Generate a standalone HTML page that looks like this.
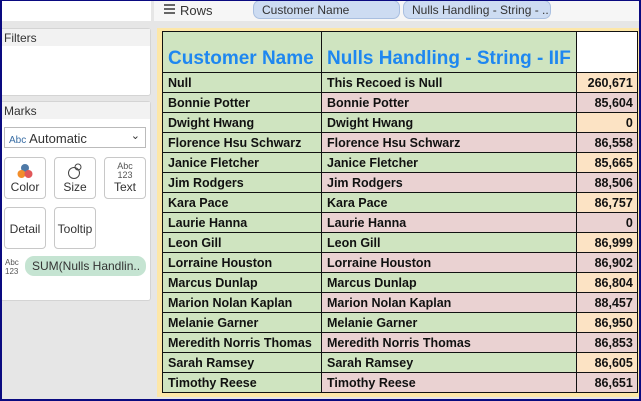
<!DOCTYPE html>
<html><head><style>
*{margin:0;padding:0;box-sizing:border-box}
body{width:641px;height:401px;overflow:hidden;background:#e6e6e6;font-family:"Liberation Sans",Arial,sans-serif;position:relative}
.abs{position:absolute}
.ui{font-family:"Liberation Sans",Arial,sans-serif;font-size:12px;color:#333;white-space:nowrap;overflow:hidden}
.card{background:#fff;border:1px solid #d4d4d4;border-radius:3px}
.btn{position:absolute;background:#fff;border:1px solid #c8c8c8;border-radius:4px;text-align:center;font-size:12px;color:#333}
table{border-collapse:collapse;position:absolute;left:162px;top:31px;table-layout:fixed}
td{border:1.5px solid #111;height:20px;font-weight:bold;font-size:12.5px;color:#111;padding:0 5px;white-space:nowrap;overflow:hidden}
.g{background:#cfe4c0}.p{background:#ead2d2}.o{background:#fce3c4}
td.n{text-align:right;padding-right:4px}
th{border:1.5px solid #111;height:41px;vertical-align:bottom;text-align:left;color:#1e87f0;font-size:19px;font-weight:bold;padding:0 5px 2px;background:#cfe4c0;white-space:nowrap}
</style></head><body>
<div class="abs" style="left:0;top:0;width:151px;height:21px;background:#fff"></div>
<div class="abs" style="left:154px;top:0;width:487px;height:21px;background:#f6f6f6"></div>
<div class="abs" style="left:164px;top:4px;width:11px;height:10px;background:repeating-linear-gradient(#666 0 2px,transparent 2px 4px)"></div>
<div class="abs ui" style="left:180px;top:3px;font-size:13px">Rows</div>
<div class="abs ui" style="left:253px;top:0px;width:147px;height:19px;background:#cddcf2;border:1px solid #a9bfe0;border-radius:7px;padding:2px 8px;font-size:12px">Customer Name</div>
<div class="abs ui" style="left:403px;top:0px;width:148px;height:19px;background:#cddcf2;border:1px solid #a9bfe0;border-radius:7px;padding:2px 8px;font-size:12px">Nulls Handling - String - ..</div>
<div class="abs card" style="left:0;top:28px;width:151px;height:68px"></div>
<div class="abs ui" style="left:1px;top:29px;width:149px;height:17px;background:#f2f2f2;padding:2px 3px">Filters</div>
<div class="abs card" style="left:0;top:101px;width:151px;height:200px"></div>
<div class="abs ui" style="left:1px;top:102px;width:149px;height:17px;background:#f2f2f2;padding:2px 3px">Marks</div>
<div class="abs ui" style="left:4px;top:127px;width:142px;height:21px;border:1px solid #bbb;background:#fff;padding:3px 4px;font-size:13px"><span style="color:#3a6ea5;font-size:10px">Abc</span> Automatic<span style="position:absolute;right:5px;top:1px;font-size:11px">&#8964;</span></div>
<div class="btn" style="left:4px;top:157px;width:42px;height:42px">
 <svg width="20" height="18" style="margin-top:4px" viewBox="0 0 20 18"><circle cx="10" cy="6" r="4" fill="#4e79a7"/><circle cx="6.5" cy="12" r="4" fill="#f28e2b"/><circle cx="13.5" cy="12" r="4" fill="#e15759"/></svg><div style="margin-top:-3px">Color</div></div>
<div class="btn" style="left:54px;top:157px;width:42px;height:42px">
 <svg width="18" height="18" style="margin-top:4px" viewBox="0 0 18 18"><circle cx="8" cy="11" r="5.5" fill="none" stroke="#444"/><circle cx="12" cy="5" r="3" fill="none" stroke="#444"/></svg><div style="margin-top:-3px">Size</div></div>
<div class="btn" style="left:104px;top:157px;width:42px;height:42px"><div style="font-size:9px;line-height:9px;margin-top:4px;color:#555">Abc<br>123</div><div>Text</div></div>
<div class="btn" style="left:4px;top:207px;width:42px;height:42px;padding-top:14px">Detail</div>
<div class="btn" style="left:54px;top:207px;width:42px;height:42px;padding-top:14px">Tooltip</div>
<div class="abs ui" style="left:5px;top:258px;font-size:8px;line-height:9px;color:#555">Abc<br>123</div>
<div class="abs ui" style="left:25px;top:256px;width:121px;height:20px;background:#c5e4d2;border-radius:9px;padding:3px 7px;font-size:12px">SUM(Nulls Handlin..</div>
<div class="abs" style="left:157px;top:28px;width:482px;height:369px;background:#fde7a8"></div>
<div class="abs" style="left:162px;top:31px;width:472px;height:361px;background:#fff"></div>
<table>
<colgroup><col style="width:159px"><col style="width:252px"><col style="width:61px"></colgroup>
<tr><th>Customer Name</th><th>Nulls Handling - String - IIF</th><th style="background:#fff"></th></tr>
<tr><td class="g">Null</td><td class="g">This Recoed is Null</td><td class="o n">260,671</td></tr>
<tr><td class="g">Bonnie Potter</td><td class="p">Bonnie Potter</td><td class="p n">85,604</td></tr>
<tr><td class="g">Dwight Hwang</td><td class="g">Dwight Hwang</td><td class="o n">0</td></tr>
<tr><td class="g">Florence Hsu Schwarz</td><td class="p">Florence Hsu Schwarz</td><td class="p n">86,558</td></tr>
<tr><td class="g">Janice Fletcher</td><td class="g">Janice Fletcher</td><td class="o n">85,665</td></tr>
<tr><td class="g">Jim Rodgers</td><td class="p">Jim Rodgers</td><td class="p n">88,506</td></tr>
<tr><td class="g">Kara Pace</td><td class="g">Kara Pace</td><td class="o n">86,757</td></tr>
<tr><td class="g">Laurie Hanna</td><td class="p">Laurie Hanna</td><td class="p n">0</td></tr>
<tr><td class="g">Leon Gill</td><td class="g">Leon Gill</td><td class="o n">86,999</td></tr>
<tr><td class="g">Lorraine Houston</td><td class="p">Lorraine Houston</td><td class="p n">86,902</td></tr>
<tr><td class="g">Marcus Dunlap</td><td class="g">Marcus Dunlap</td><td class="o n">86,804</td></tr>
<tr><td class="g">Marion Nolan Kaplan</td><td class="p">Marion Nolan Kaplan</td><td class="p n">88,457</td></tr>
<tr><td class="g">Melanie Garner</td><td class="g">Melanie Garner</td><td class="o n">86,950</td></tr>
<tr><td class="g">Meredith Norris Thomas</td><td class="p">Meredith Norris Thomas</td><td class="p n">86,853</td></tr>
<tr><td class="g">Sarah Ramsey</td><td class="g">Sarah Ramsey</td><td class="o n">86,605</td></tr>
<tr><td class="g">Timothy Reese</td><td class="p">Timothy Reese</td><td class="p n">86,651</td></tr>
</table>
<div class="abs" style="left:0;top:0;width:2px;height:401px;background:#0a0a80;z-index:5"></div>
<div class="abs" style="right:0;top:0;width:2px;height:401px;background:#0a0a80;z-index:5"></div>
<div class="abs" style="left:0;bottom:0;width:641px;height:2px;background:#0a0a80;z-index:5"></div>
<div class="abs" style="left:0;top:0;width:641px;height:1px;background:#0a0a80;z-index:5"></div>
</body></html>
